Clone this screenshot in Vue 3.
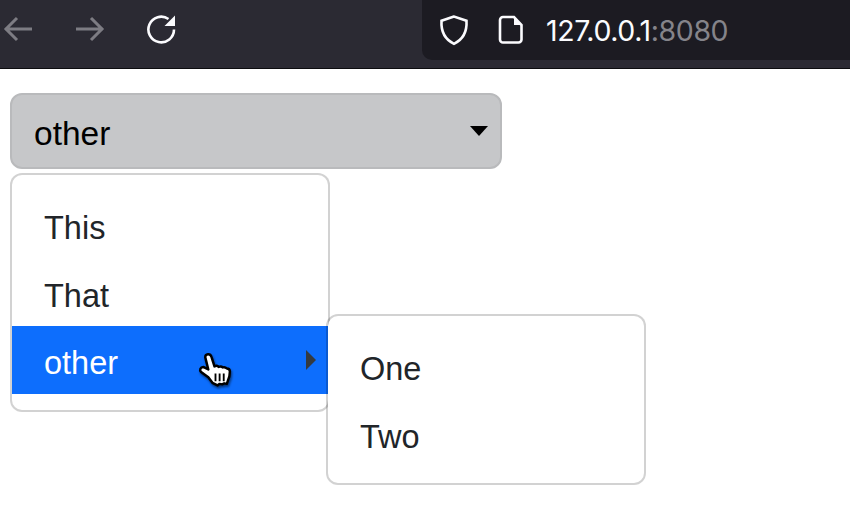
<template>
  <div class="page-root">
    <header class="toolbar">
      <div class="nav-buttons">
        <svg class="icon dim" viewBox="0 0 32 32" width="32" height="32"><path d="M30 16H3M15 5 4 16l11 11" /></svg>
        <svg class="icon dim" viewBox="0 0 32 32" width="32" height="32"><path d="M2 16h27M17 5l11 11-11 11" /></svg>
        <svg class="icon reload" viewBox="0 0 32 32" width="32" height="32">
          <path d="M28 16.500A12.800 12.800 0 1 1 22.500 6" />
          <path class="solid" d="M29 2.500v10.500H18.500z" />
        </svg>
      </div>
      <div class="address-bar">
        <svg class="icon shield" viewBox="0 0 32 32" width="32" height="32"><path d="M16 2.500 3.500 6.800c-.6 10.500 3.500 18.700 12.500 23 9-4.300 13.100-12.500 12.500-23z" /></svg>
        <svg class="icon file" viewBox="0 0 26 32" width="26" height="32">
          <path d="M5 3h11l7.500 8v14.500a3 3 0 0 1-3 3H5a3 3 0 0 1-3-3V6a3 3 0 0 1 3-3z" />
          <path class="solid" d="M16 3l7.500 8H16z" />
        </svg>
        <span class="url">127.0.0.1<span class="port">:8080</span></span>
      </div>
    </header>

    <main class="content">
      <div class="dropdown">
        <button class="toggle">
          <span>{{ selected }}</span>
          <span class="caret-down"></span>
        </button>
        <ul class="menu">
          <li v-for="item in items" :key="item.label" class="menu-item" :class="{ active: item.children }">
            {{ item.label }}
            <span v-if="item.children" class="caret-right"></span>
            <svg v-if="item.children" class="cursor" viewBox="0 0 36 36" width="37" height="39">
              <path class="hand" d="M8 5c0-3.500 5-4 6-.5l3 9.500c1.500-1 3-1 4 .5 1.500-.5 3-.5 4 .5 1.500-.5 3 0 4 1 1.500 0 3 1 3 3 0 3-1 7-2 9l-1 3-2.500-.5-2 1-2.500-.5-2 1.500-3-1.500-2-1-4-5.500-7-5c-2-2-.5-5 2-5l5 2.500z" />
              <path class="lines" d="M18 21v7.500M22 21v7.500M26 21v7.500" />
            </svg>
            <ul v-if="item.children" class="menu submenu">
              <li v-for="child in item.children" :key="child" class="menu-item">{{ child }}</li>
            </ul>
          </li>
        </ul>
      </div>
    </main>
  </div>
</template>

<script setup>
const selected = 'other'
const items = [
  { label: 'This' },
  { label: 'That' },
  { label: 'other', children: ['One', 'Two'] }
]
</script>

<style scoped>
.page-root { width: 850px; height: 518px; overflow: hidden; background: #fff; font-family: "Liberation Sans", Arial, sans-serif; }

.toolbar { height: 69px; display: flex; background: #2b2a33; border-bottom: 1px solid #0c0c0f; box-sizing: border-box; }
.nav-buttons { width: 422px; display: flex; align-items: center; padding: 0 0 11px 2px; gap: 40px; box-sizing: border-box; }
.address-bar { flex: 1; height: 60px; display: flex; align-items: center; gap: 28px; padding-left: 16px; background: #1c1b22; border-bottom-left-radius: 10px; }

.icon { fill: none; stroke: #fbfbfe; stroke-width: 2.6; flex: none; }
.icon.dim { stroke: #7d7c83; stroke-width: 3; }
.icon .solid { fill: #fbfbfe; stroke: none; }
.url { color: #fbfbfe; font-family: Inter, sans-serif; font-size: 28.500px; margin-left: -6px; letter-spacing: -0.4px; }
.port { color: #85848a; }

.content { padding: 24px 10px 0; }
.dropdown { position: relative; width: 492px; }
.toggle { width: 100%; height: 76px; display: flex; align-items: center; justify-content: space-between; padding: 6px 12px 0 22px; box-sizing: border-box; background: #c6c7c9; border: 2px solid #b9babc; border-radius: 12px; color: #000; font: inherit; font-size: 33.500px; }
.caret-down { width: 0; height: 0; margin-bottom: 6px; border-top: 10px solid #000; border-left: 9px solid transparent; border-right: 9px solid transparent; }

.menu { position: absolute; top: 80px; left: 0; width: 320px; margin: 0; padding: 16px 0; list-style: none; box-sizing: border-box; background: #fff; background-clip: padding-box; border: 2px solid rgba(0, 0, 0, .175); border-radius: 12px; }
.menu-item { position: relative; height: 67.500px; line-height: 75px; padding: 0 32px; font-size: 32.500px; color: #212529; }
.menu-item.active { background: #0d6efd; color: #fff; }
.caret-right { position: absolute; right: 12px; top: 24px; width: 0; height: 0; border-left: 10px solid #343a40; border-top: 10px solid transparent; border-bottom: 10px solid transparent; }
.cursor { position: absolute; left: 185px; top: 25px; }
.hand { fill: #fff; stroke: #000; stroke-width: 2.400; stroke-linejoin: round; filter: drop-shadow(1px 2px 1px rgba(0, 0, 0, .5)); }
.lines { fill: none; stroke: #000; stroke-width: 1.800; }

.submenu { top: -12px; left: 314px; height: 171px; z-index: 2; }
</style>

<style>
html, body { margin: 0; overflow: hidden; }
</style>
